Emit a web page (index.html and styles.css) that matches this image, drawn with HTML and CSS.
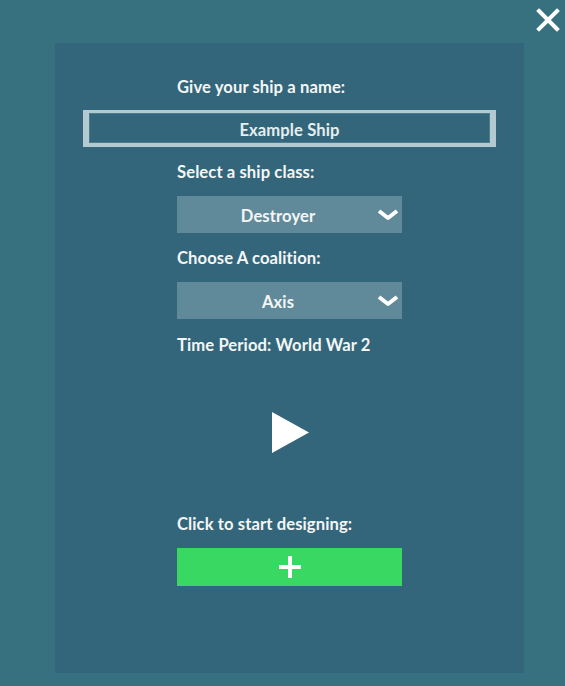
FILE: index.html
```html
<!DOCTYPE html>
<html>
<head>
<meta charset="utf-8">
<link rel="stylesheet" href="styles.css">
</head>
<body>
<div class="page">
  <button class="close" aria-label="Close">
    <svg width="24" height="24" viewBox="0 0 24 24"><path d="M3 3 L21 21 M21 3 L3 21" stroke="#fff" stroke-width="4" stroke-linecap="square"/></svg>
  </button>
  <div class="panel">
    <div class="label l1">Give your ship a name:</div>
    <div class="name-input">Example Ship</div>
    <div class="label l2">Select a ship class:</div>
    <div class="select">
      <span class="select-text">Destroyer</span>
      <svg class="chev" width="22" height="12" viewBox="0 0 22 12"><path d="M2 2 L11 9 L20 2" fill="none" stroke="#fff" stroke-width="4" stroke-linejoin="round"/></svg>
    </div>
    <div class="label l3">Choose A coalition:</div>
    <div class="select">
      <span class="select-text">Axis</span>
      <svg class="chev" width="22" height="12" viewBox="0 0 22 12"><path d="M2 2 L11 9 L20 2" fill="none" stroke="#fff" stroke-width="4" stroke-linejoin="round"/></svg>
    </div>
    <div class="label l4">Time Period: World War 2</div>
    <div class="play">
      <svg width="37" height="41" viewBox="0 0 37 41"><polygon points="0,0 37,20.5 0,41" fill="#fff"/></svg>
    </div>
    <div class="label l5">Click to start designing:</div>
    <div class="add">
      <svg width="24" height="24" viewBox="0 0 24 24"><path d="M12 1 V23 M1 12 H23" stroke="#fff" stroke-width="4"/></svg>
    </div>
  </div>
</div>
</body>
</html>
```
FILE: styles.css
```css
html, body {
  margin: 0;
  padding: 0;
}
body {
  background: #37717f;
  font-family: Lato, "Open Sans", sans-serif;
  font-weight: 700;
  color: #f4f6f6;
  width: 565px;
  height: 686px;
  overflow: hidden;
}
.page {
  position: relative;
  padding-top: 43px;
  padding-left: 55px;
}
.close {
  position: absolute;
  top: 8px;
  left: 536px;
  width: 24px;
  height: 24px;
  padding: 0;
  border: 0;
  background: none;
}
.close svg { display: block; }
.panel {
  width: 469px;
  height: 630px;
  background: #33667a;
  display: flex;
  flex-direction: column;
  align-items: center;
  box-sizing: border-box;
  padding-top: 33px;
}
.label {
  width: 225px;
  font-size: 16.6px;
  letter-spacing: 0.1px;
  line-height: 22px;
  height: 20px;
  white-space: nowrap;
}
.name-input {
  margin-top: 14px;
  width: 413px;
  height: 37px;
  box-sizing: border-box;
  border-style: solid;
  border-color: #b4cad1;
  border-width: 3px 6px 4px 6px;
  box-shadow: inset 0 0 0 1px #4a7d8d;
  text-align: center;
  font-size: 16.6px;
  letter-spacing: 0.1px;
  line-height: 30px;
  padding-top: 2px;
  color: #e6eef0;
}
.l2 { margin-top: 14px; }
.l3 { margin-top: 14px; }
.l4 { margin-top: 15px; }
.l5 { margin-top: 60px; }
.select {
  margin-top: 15px;
  width: 225px;
  height: 37px;
  background: #608a99;
  display: flex;
  align-items: center;
  box-sizing: border-box;
  padding-right: 3px;
}
.select-text {
  flex: 1;
  text-align: center;
  font-size: 16.6px;
  letter-spacing: 0.1px;
  line-height: 20px;
  padding-left: 2px;
  padding-top: 2px;
}
.chev { display: block; }
.play {
  margin-top: 58px;
  height: 41px;
  padding-left: 1px;
}
.play svg { display: block; }
.add {
  margin-top: 15px;
  width: 225px;
  height: 38px;
  background: #39d862;
  display: flex;
  align-items: center;
  justify-content: center;
}
.add svg { display: block; }
```
